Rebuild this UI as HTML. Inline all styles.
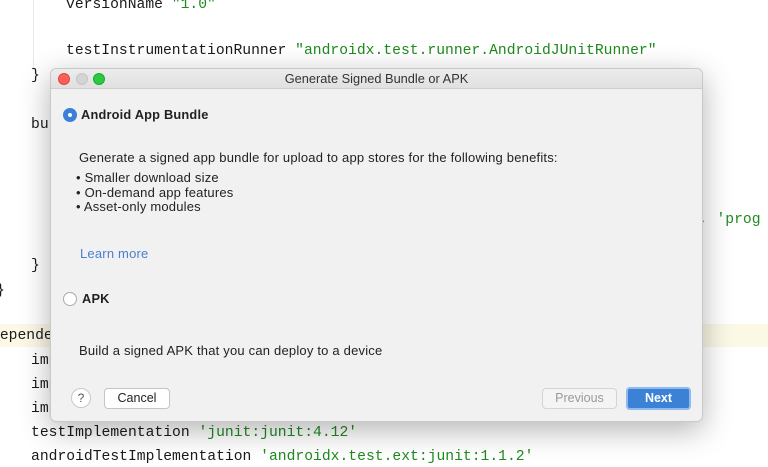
<!DOCTYPE html>
<html><head><meta charset="utf-8"><style>
*{margin:0;padding:0;box-sizing:border-box}
body{width:768px;height:467px;overflow:hidden;background:#fff;position:relative;font-family:"Liberation Sans",sans-serif}
.code{position:absolute;font-family:"Liberation Mono",monospace;font-size:14.7px;color:#1a1a1a;white-space:pre;line-height:18px}
.s{color:#1f8a1f}
.hl{position:absolute;left:0;top:324px;width:768px;height:23px;background:#fbf8e6}
.gut{position:absolute;left:33px;top:0;width:1px;height:70px;background:#e8e8e8}
.dlg{position:absolute;left:50px;top:68px;width:653px;height:354px;background:#f1f1f1;border:1px solid #c9c9c9;border-radius:6px;box-shadow:0 8px 30px rgba(0,0,0,.3);overflow:hidden}
.tb{height:20px;background:linear-gradient(#ececec,#e0e0e0);border-bottom:1px solid #cfcfcf;text-align:center;font-size:12.8px;color:#333;line-height:20px}
.dot{position:absolute;top:4px;width:12px;height:12px;border-radius:50%}
.t{position:absolute;font-size:13px;letter-spacing:0.2px;color:#222;white-space:nowrap}
.b{font-weight:bold;font-size:12.8px;letter-spacing:0.2px}
.radio{position:absolute;width:14px;height:14px;border-radius:50%}
.btn{position:absolute;height:21px;border-radius:4px;font-size:12.5px;text-align:center;line-height:19px}
</style></head><body>
<div class="gut"></div>
<div class="hl"></div>
<div class="code" style="left:66px;top:-4px">versionName <span class="s">"1.0"</span></div>
<div class="code" style="left:66px;top:42px">testInstrumentationRunner <span class="s">"androidx.test.runner.AndroidJUnitRunner"</span></div>
<div class="code" style="left:31px;top:67px">}</div>
<div class="code" style="left:31px;top:116px">bu</div>
<div class="code" style="left:690px;top:211px">), <span class="s">'prog</span></div>
<div class="code" style="left:31px;top:257px">}</div>
<div class="code" style="left:-4px;top:282px">}</div>
<div class="code" style="left:-9px;top:327px">depende</div>
<div class="code" style="left:31px;top:352px">imp</div>
<div class="code" style="left:31px;top:376px">imp</div>
<div class="code" style="left:31px;top:400px">imp</div>
<div class="code" style="left:31px;top:424px">testImplementation <span class="s">'junit:junit:4.12'</span></div>
<div class="code" style="left:31px;top:448px">androidTestImplementation <span class="s">'androidx.test.ext:junit:1.1.2'</span></div>

<div class="dlg">
 <div class="tb">Generate Signed Bundle or APK</div>
 <div class="dot" style="left:7px;background:#fc5f57;border:1px solid #e0443e"></div>
 <div class="dot" style="left:25px;background:#d4d4d4;border:1px solid #c4c4c4"></div>
 <div class="dot" style="left:42px;background:#2ac940;border:1px solid #1eaa2f"></div>
 <div class="radio" style="left:12px;top:39px;background:#3a80d8"><div style="position:absolute;left:5px;top:5px;width:4px;height:4px;border-radius:50%;background:#fff"></div></div>
 <div class="t b" style="left:30px;top:38px">Android App Bundle</div>
 <div class="t" style="left:28px;top:81px">Generate a signed app bundle for upload to app stores for the following benefits:</div>
 <div class="t" style="left:25px;top:102px;line-height:14.5px">• Smaller download size<br>• On-demand app features<br>• Asset-only modules</div>
 <div class="t" style="left:29px;top:177px;color:#4a7fd0">Learn more</div>
 <div class="radio" style="left:12px;top:223px;background:#fff;border:1px solid #aaa"></div>
 <div class="t b" style="left:31px;top:222px">APK</div>
 <div class="t" style="left:28px;top:274px">Build a signed APK that you can deploy to a device</div>
 <div style="position:absolute;left:20px;top:319px;width:20px;height:20px;border-radius:50%;background:#fff;border:1px solid #c8c8c8;text-align:center;line-height:18px;font-size:12px;color:#555">?</div>
 <div class="btn" style="left:53px;top:319px;width:66px;background:#fff;border:1px solid #c4c4c4;color:#222">Cancel</div>
 <div class="btn" style="left:491px;top:319px;width:75px;background:#f4f4f4;border:1px solid #d4d4d4;color:#9a9a9a">Previous</div>
 <div class="btn" style="left:575px;top:318px;width:65px;height:23px;background:#3b82d6;border:2px solid #8fbaf0;color:#fff;font-weight:bold;line-height:19px">Next</div>
</div>
</body></html>
